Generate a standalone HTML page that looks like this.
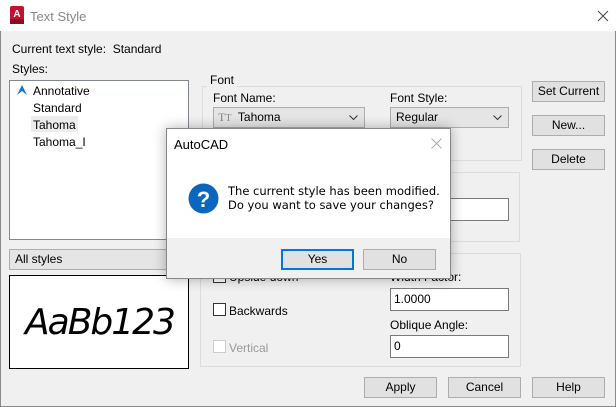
<!DOCTYPE html>
<html><head><style>
*{box-sizing:border-box;margin:0;padding:0}
body{width:616px;height:407px;overflow:hidden;font-family:"Liberation Sans",sans-serif;font-size:12px;color:#000;background:#f0f0f0;position:relative}
.a{position:absolute}
.win{left:0;top:0;width:616px;height:407px;border:1px solid #8a8a8a;background:#f0f0f0}
.tb{left:0;top:0;width:616px;height:31px;background:#fff}
.btn{position:absolute;background:#e1e1e1;border:1px solid #adadad;text-align:center;line-height:18px;font-size:12px}
.cb{position:absolute;background:#e5e5e5;border:1px solid #adadad;height:21px;line-height:19px;padding-left:5px}
.in{position:absolute;background:#fff;border:1px solid #7a7a7a;line-height:20px;padding-left:3px}
.grp{position:absolute;border:1px solid #dcdcdc}
.chk{position:absolute;width:13px;height:13px;border:1px solid #333;background:#fff}
.chev{position:absolute;right:6px;top:7px}
</style></head><body>
<div class="a win"></div>
<div class="a tb"></div>
<svg class="a" style="left:10px;top:6px" width="14" height="18"><rect width="14" height="18" rx="2" fill="#c8102e"/><rect y="13" width="14" height="5" fill="#8e0b20"/><text x="7" y="11" font-size="10" font-weight="bold" fill="#fff" text-anchor="middle" font-family="Liberation Sans">A</text></svg>
<div class="a" style="left:30px;top:9px;font-size:13px;color:#888">Text Style</div>
<svg class="a" style="left:597px;top:10px" width="12" height="12"><path d="M1 1L11 11M11 1L1 11" stroke="#444" stroke-width="1"/></svg>
<div class="a" style="left:12px;top:42px">Current text style:&nbsp; Standard</div>
<div class="a" style="left:12px;top:62px">Styles:</div>
<div class="a" style="left:9px;top:80px;width:180px;height:160px;background:#fff;border:1px solid #828790"></div>
<svg class="a" style="left:16px;top:85px" width="12" height="11"><path d="M6 0 L1 10 L6 6 L11 10 Z" fill="#1a73c8"/></svg>
<div class="a" style="left:33px;top:84px">Annotative</div>
<div class="a" style="left:33px;top:101px">Standard</div>
<div class="a" style="left:31px;top:116px;width:47px;height:16px;background:#ececec"></div>
<div class="a" style="left:33px;top:118px">Tahoma</div>
<div class="a" style="left:33px;top:135px">Tahoma_I</div>
<div class="cb" style="left:9px;top:249px;width:180px">All styles</div>
<div class="a" style="left:9px;top:275px;width:180px;height:94px;background:#fff;border:1px solid #000"></div>
<div class="a" style="left:25px;top:302px;font-size:36px;font-style:italic;font-family:'DejaVu Sans',sans-serif;letter-spacing:-2px">AaBb123</div>
<div class="grp" style="left:202px;top:86px;width:320px;height:75px"></div>
<div class="a" style="left:207px;top:73px;background:#f0f0f0;padding:0 3px">Font</div>
<div class="a" style="left:213px;top:91px">Font Name:</div>
<div class="cb" style="left:213px;top:107px;width:152px;padding-left:4px"><span style="color:#888;font-family:'Liberation Serif'">T<small>T</small></span>&nbsp; Tahoma<svg class="chev" width="9" height="6"><path d="M0.5 0.5L4.5 4.5L8.5 0.5" fill="none" stroke="#333"/></svg></div>
<div class="a" style="left:390px;top:91px">Font Style:</div>
<div class="cb" style="left:390px;top:107px;width:119px">Regular<svg class="chev" width="9" height="6"><path d="M0.5 0.5L4.5 4.5L8.5 0.5" fill="none" stroke="#333"/></svg></div>
<div class="btn" style="left:532px;top:81px;width:73px;height:21px">Set Current</div>
<div class="btn" style="left:532px;top:115px;width:73px;height:21px">New...</div>
<div class="btn" style="left:532px;top:149px;width:73px;height:21px">Delete</div>
<div class="grp" style="left:200px;top:172px;width:320px;height:70px"></div>
<div class="in" style="left:450px;top:198px;width:59px;height:23px"></div>
<div class="grp" style="left:200px;top:253px;width:321px;height:114px"></div>
<div class="chk" style="left:213px;top:270px"></div>
<div class="a" style="left:229px;top:270px">Upside down</div>
<div class="a" style="left:390px;top:270px">Width Factor:</div>
<div class="in" style="left:390px;top:288px;width:119px;height:23px">1.0000</div>
<div class="chk" style="left:213px;top:303px"></div>
<div class="a" style="left:229px;top:304px">Backwards</div>
<div class="a" style="left:390px;top:318px">Oblique Angle:</div>
<div class="in" style="left:390px;top:335px;width:119px;height:23px">0</div>
<div class="chk" style="left:213px;top:340px;border-color:#ccc"></div>
<div class="a" style="left:229px;top:341px;color:#999">Vertical</div>
<div class="btn" style="left:364px;top:377px;width:73px;height:21px">Apply</div>
<div class="btn" style="left:448px;top:377px;width:73px;height:21px">Cancel</div>
<div class="btn" style="left:532px;top:377px;width:73px;height:21px">Help</div>
<div class="a" style="left:166px;top:128px;width:285px;height:151px;background:#fff;border:1px solid #888;box-shadow:0 0 12px rgba(0,0,0,.3)">
<div class="a" style="left:7px;top:8px;font-size:13px">AutoCAD</div>
<svg class="a" style="left:264px;top:9px" width="11" height="11"><path d="M0.5 0.5L10.5 10.5M10.5 0.5L0.5 10.5" stroke="#aaa"/></svg>
<svg class="a" style="left:21px;top:54px" width="31" height="31"><circle cx="15.5" cy="15.5" r="15" fill="#0b67bd"/><text x="15.5" y="24" font-size="22" font-weight="bold" fill="#fff" text-anchor="middle" font-family="Liberation Sans">?</text></svg>
<div class="a" style="left:61px;top:55px;font-family:'DejaVu Sans',sans-serif;font-size:11.5px;line-height:14px;color:#000">The current style has been modified.<br>Do you want to save your changes?</div>
<div class="a" style="left:0;top:109px;width:283px;height:40px;background:#f0f0f0"></div>
<div class="btn" style="left:114px;top:120px;width:73px;height:21px;border:2px solid #0078d7;line-height:17px">Yes</div>
<div class="btn" style="left:196px;top:120px;width:73px;height:21px">No</div>
</div>
</body></html>
